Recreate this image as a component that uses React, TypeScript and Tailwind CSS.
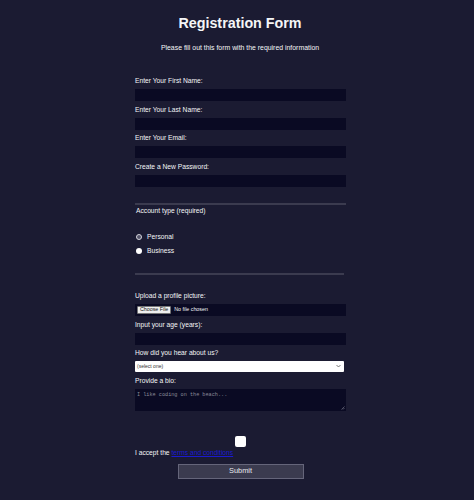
const fields = [
  { label: "Enter Your First Name:" },
  { label: "Enter Your Last Name:" },
  { label: "Enter Your Email:" },
  { label: "Create a New Password:" },
];

function Label({ children }: { children: React.ReactNode }) {
  return <div className="text-[6.7px] leading-[10px] text-[#f5f6f7]">{children}</div>;
}

function TextBox() {
  return <div className="mt-[3px] h-[12px] w-full bg-[#0a0a23]" />;
}

export default function App() {
  return (
    <div className="min-h-[500px] bg-[#1b1b32] pl-[6px] font-['Liberation_Sans',Arial,sans-serif] text-[#f5f6f7]">
      <div className="mx-auto w-[212px] pt-[14px]">
        <h1 className="text-center text-[14.3px] font-bold leading-[18px]">Registration Form</h1>
        <p className="mt-[11px] text-center text-[6.9px] leading-[10px]">
          Please fill out this form with the required information
        </p>

        <div className="ml-[1px]">
          {/* basic details */}
          <div className="mt-[23px] border-b-2 border-[#3b3b4f] pb-[16px]">
            {fields.map((f, i) => (
              <div key={f.label} className={i === 0 ? "" : "mt-[3.5px]"}>
                <Label>{f.label}</Label>
                <TextBox />
              </div>
            ))}
          </div>

          {/* account type */}
          <div className="mr-[2px] border-b-2 border-[#3b3b4f] pb-[17px]">
            <div className="mt-[1px] pl-[1px]">
              <Label>Account type (required)</Label>
            </div>
            <div className="mt-[16px] flex items-center gap-[5px] pl-[1px]">
              <span className="h-[6px] w-[6px] rounded-full border-[1.5px] border-[#d4d4dc] bg-[#55556a]" />
              <span className="text-[6.7px] leading-[10px]">Personal</span>
            </div>
            <div className="mt-[4px] flex items-center gap-[5px] pl-[1px]">
              <span className="h-[6px] w-[6px] rounded-full bg-white" />
              <span className="text-[6.7px] leading-[10px]">Business</span>
            </div>
          </div>

          {/* other details */}
          <div className="mt-[16px]">
            <Label>Upload a profile picture:</Label>
            <div className="mt-[3px] flex h-[12px] items-center gap-[3px] bg-[#0a0a23] pl-[2px]">
              <span className="flex h-[8px] items-center rounded-[1px] border border-[#767676] bg-[#efefef] px-[2px] text-[5.3px] leading-none text-[#111]">
                Choose File
              </span>
              <span className="text-[5.3px] leading-none text-[#f5f6f7]">No file chosen</span>
            </div>

            <div className="mt-[4px]">
              <Label>Input your age (years):</Label>
              <TextBox />
            </div>

            <div className="mt-[3px]">
              <Label>How did you hear about us?</Label>
              <div className="mt-[3px] mr-[2px] flex h-[11px] items-center justify-between rounded-[1px] bg-white px-[2px]">
                <span className="text-[5px] leading-none text-[#333]">(select one)</span>
                <svg width="5" height="4" viewBox="0 0 10 8" className="mr-[1px]">
                  <path d="M1 2l4 4 4-4" fill="none" stroke="#555" strokeWidth="1.6" />
                </svg>
              </div>
            </div>

            <div className="mt-[4px]">
              <Label>Provide a bio:</Label>
              <div className="relative mt-[3px] h-[22px] w-full bg-[#0a0a23] px-[2px] pt-[3px] leading-none">
                <span className="block font-['Liberation_Mono',monospace] text-[5.2px] leading-[6px] text-[#8a8a99]">
                  I like coding on the beach...
                </span>
                <svg width="4" height="4" viewBox="0 0 8 8" className="absolute bottom-[1px] right-[1px]">
                  <path d="M7 1L1 7M7 4L4 7" stroke="#9a9aaa" strokeWidth="1" />
                </svg>
              </div>
            </div>
          </div>

          {/* terms and submit */}
          <div className="mt-[25px] flex justify-center">
            <div className="h-[11px] w-[11px] rounded-[2px] bg-white" />
          </div>
          <div className="mt-[1px] text-[6.7px] leading-[10px]">
            I accept the{" "}
            <a href="#" className="text-[#1a1ad0] underline">
              terms and conditions
            </a>
          </div>
          <div className="mt-[6px] flex justify-center">
            <button className="h-[15px] w-[126px] border border-[#65657a] bg-[#3b3b4f] text-[7.4px] leading-none text-[#e8e8ee]">
              Submit
            </button>
          </div>
        </div>
      </div>
    </div>
  );
}
